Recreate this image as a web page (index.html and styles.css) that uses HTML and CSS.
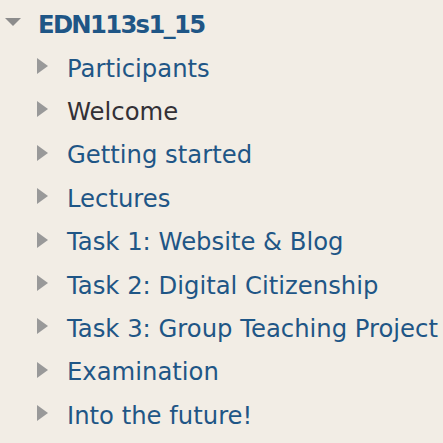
FILE: index.html
```html
<!DOCTYPE html>
<html lang="en">
<head>
  <meta charset="UTF-8">
  <title>EDN113s1_15</title>
  <link rel="stylesheet" href="styles.css">
</head>
<body>

<div class="tree">
  <div class="node root">
    <span class="arrow down"></span>
    <a class="label">EDN113s1_15</a>
  </div>
  <ul class="children">
    <li class="node"><span class="arrow"></span><a class="label">Participants</a></li>
    <li class="node"><span class="arrow"></span><span class="label plain">Welcome</span></li>
    <li class="node"><span class="arrow"></span><a class="label">Getting started</a></li>
    <li class="node"><span class="arrow"></span><a class="label">Lectures</a></li>
    <li class="node"><span class="arrow"></span><a class="label">Task 1: Website &amp; Blog</a></li>
    <li class="node"><span class="arrow"></span><a class="label">Task 2: Digital Citizenship</a></li>
    <li class="node"><span class="arrow"></span><a class="label">Task 3: Group Teaching Project</a></li>
    <li class="node"><span class="arrow"></span><a class="label">Examination</a></li>
    <li class="node"><span class="arrow"></span><a class="label">Into the future!</a></li>
  </ul>
</div>

</body>
</html>
```

FILE: styles.css
```css
body {
  margin: 0;
  background-color: #f2ede5;
  font-family: "DejaVu Sans", Verdana, sans-serif;
  font-size: 24.3px;
  color: #1f5686;
}
.tree {
  padding-top: 3px;
}
.node {
  display: flex;
  align-items: center;
  height: 43.4px;
  white-space: nowrap;
}
.root {
  padding-left: 5px;
  gap: 17px;
}
.root .label {
  font-weight: bold;
  letter-spacing: -1.7px;
}
.children {
  list-style: none;
  margin: 0;
  padding: 0;
}
.children .node {
  padding-left: 37px;
  gap: 19px;
}
.label {
  color: #1f5686;
  text-decoration: none;
}
.label.plain {
  color: #333036;
}
.arrow {
  width: 0;
  height: 0;
  margin-top: -4px;
  border-top: 8px solid transparent;
  border-bottom: 8px solid transparent;
  border-left: 11px solid #999999;
}
.arrow.down {
  border-left: 8.5px solid transparent;
  border-right: 8.5px solid transparent;
  border-top: 8px solid #8c8c8c;
  border-bottom: 0;
  margin-top: -6px;
}
```
